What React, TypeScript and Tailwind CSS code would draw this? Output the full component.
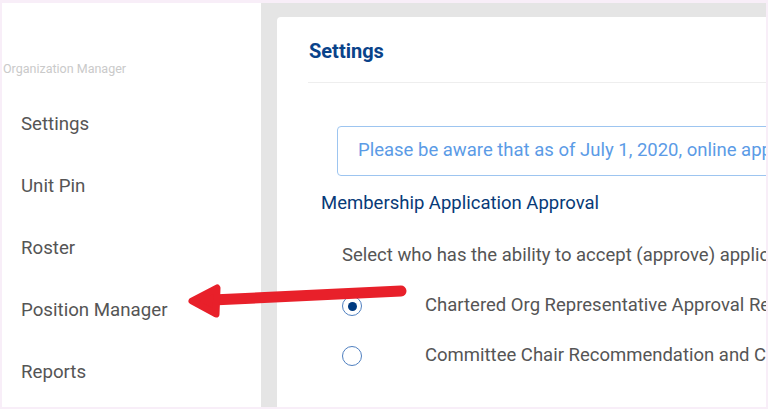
const font = { fontFamily: "Roboto, 'Liberation Sans', sans-serif" };

const menu = ["Settings", "Unit Pin", "Roster", "Position Manager", "Reports"];

function Radio({ checked }: { checked?: boolean }) {
  return (
    <span className="flex h-[20px] w-[20px] shrink-0 items-center justify-center rounded-full border-[1.5px] border-[#4f7fc0] bg-white">
      {checked && <span className="h-[9px] w-[9px] rounded-full bg-[#003a80]" />}
    </span>
  );
}

export default function App() {
  return (
    <div
      className="relative flex h-[409px] w-[768px] overflow-hidden border-2 border-t-[3px] border-[#f8eef8] bg-white"
      style={font}
    >
      {/* Sidebar */}
      <aside className="w-[259px] shrink-0 bg-white">
        <p className="mt-[59px] pl-[1px] text-[12.5px] leading-[14px] text-[#cacaca]">Organization Manager</p>
        <nav className="mt-[17px] flex flex-col">
          {menu.map((m) => (
            <div key={m} className="flex h-[62px] items-center pl-[19px] text-[18.7px] text-[#555]">
              {m}
            </div>
          ))}
        </nav>
      </aside>

      {/* Main */}
      <main className="flex-1 overflow-hidden bg-[#e5e5e5] pl-[16px] pt-[14px]">
        <div className="h-full overflow-hidden whitespace-nowrap rounded-tl-[4px] bg-white pt-[22px]">
          <h1 className="pl-[32px] text-[20px] font-bold leading-[24px] text-[#0a438a]">Settings</h1>
          <div className="ml-[31px] mt-[19px] border-t border-[#eeeeee]" />

          <div className="ml-[60px] mt-[43px] flex h-[50px] w-[600px] items-center rounded-[4px] border border-[#9dc5f0] pl-[20px] text-[18.5px] text-[#5b9be6]">
            Please be aware that as of July 1, 2020, online applications
          </div>

          <p className="mt-[15px] pl-[44px] text-[18.5px] leading-[24px] text-[#073a78]">
            Membership Application Approval
          </p>
          <p className="mt-[28px] pl-[65px] text-[18.5px] leading-[24px] text-[#555]">
            Select who has the ability to accept (approve) applications
          </p>

          <div className="mt-[14px] flex flex-col pl-[65px]">
            <label className="flex h-[50px] items-center">
              <Radio checked />
              <span className="pl-[63px] text-[18.5px] text-[#555]">Chartered Org Representative Approval Required</span>
            </label>
            <label className="flex h-[50px] items-center">
              <Radio />
              <span className="pl-[63px] text-[18.5px] text-[#555]">Committee Chair Recommendation and Chartered Org</span>
            </label>
          </div>
        </div>
      </main>

      {/* Annotation arrow */}
      <svg
        className="pointer-events-none absolute left-[-2px] top-[-3px]"
        width="768"
        height="409"
        viewBox="0 0 768 409"
      >
        <line x1="401" y1="291" x2="212" y2="300" stroke="#e8202a" strokeWidth="11" strokeLinecap="round" />
        <polygon
          points="192,301 217,288 216,314"
          fill="#e8202a"
          stroke="#e8202a"
          strokeWidth="7"
          strokeLinejoin="round"
        />
      </svg>
    </div>
  );
}
